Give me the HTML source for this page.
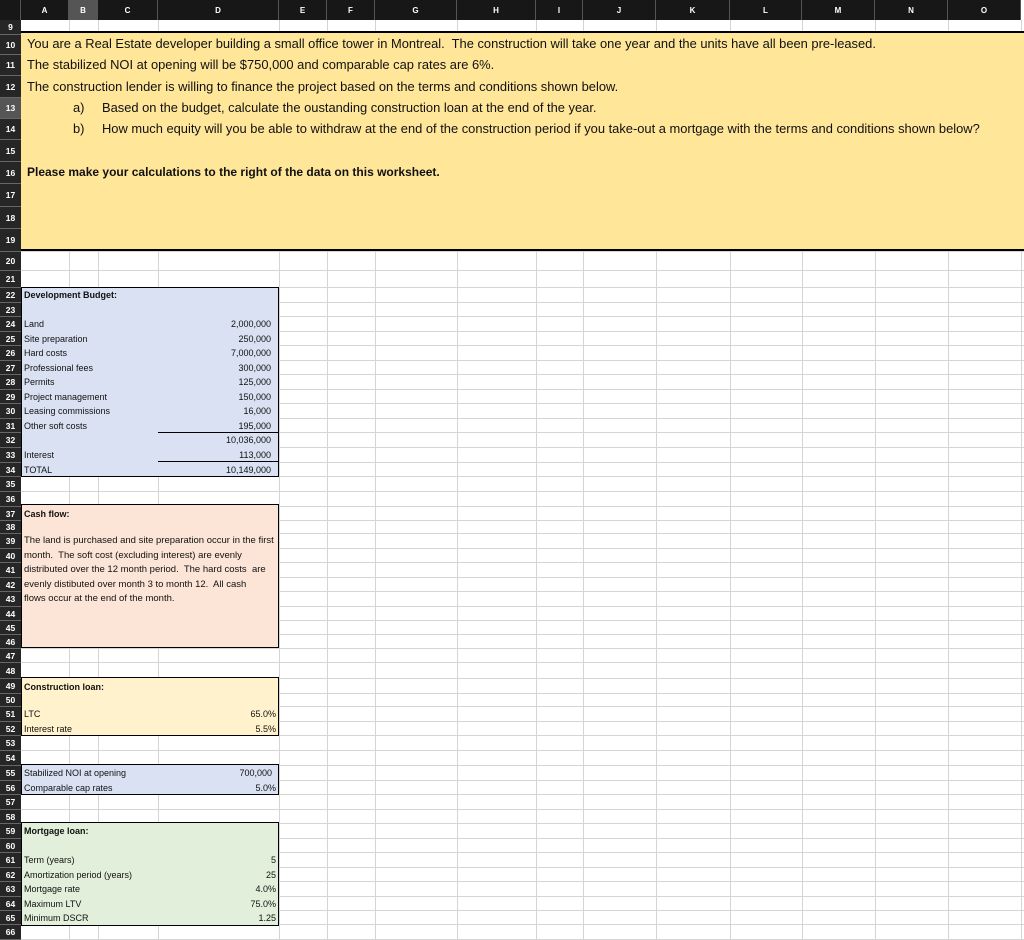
<!DOCTYPE html>
<html><head><meta charset="utf-8">
<style>
*{margin:0;padding:0;box-sizing:border-box}
body{width:1024px;height:940px;overflow:hidden;background:#fff;position:relative;font-family:"Liberation Sans",Arial,sans-serif}
.a{position:absolute}
.hl{position:absolute;height:1px;background:#d4d4d4;left:21px;right:0}
.vl{position:absolute;width:1px;background:#d4d4d4}
.rh{position:absolute;left:0;width:21px;background:#262626;color:#fff;font-size:8.5px;font-weight:bold;text-align:center;border-bottom:1px solid #666;display:flex;align-items:center;justify-content:center}
.ch{position:absolute;top:0;height:20px;background:#171717;color:#fff;font-size:8px;font-weight:bold;display:flex;align-items:center;justify-content:center;border-right:1px solid #555}
.box{position:absolute;left:21px;width:258px;border:1.5px solid #000}
.t{position:absolute;font-size:9px;color:#111;white-space:nowrap}
.r{position:absolute;font-size:9px;color:#111;white-space:nowrap;right:3px;text-align:right}
.y{position:absolute;left:27px;font-size:12.9px;color:#111;white-space:nowrap}
.cf{font-size:9.5px}
</style></head><body>
<div id="g"></div>
<script>
var g=document.getElementById('g'),h='';
var cols=[21,69,98,158,279,327,375,457,536,583,656,730,802,875,948,1021,1024];
var labs='ABCDEFGHIJKLMNO';
for(var i=0;i<15;i++){h+='<div class="ch" style="left:'+cols[i]+'px;width:'+(cols[i+1]-cols[i])+'px;'+(i==1?'background:#555;':'')+'">'+labs[i]+'</div>';}
h+='<div class="ch" style="left:0;width:21px"></div>';
var c={9:25,10:44,11:65,12:87,13:108,14:129,15:151,16:173,17:195,18:218,19:240,20:263,21:279,22:296,23:310,24:324,25:339,26:353,27:368,28:382,29:397,30:411,31:426,32:440,33:455,34:470,35:484,36:499,37:514,38:527,39:541,40:556,41:570,42:585,43:599,44:614,45:628,46:642,47:656,48:670,49:687,50:700,51:714,52:729,53:743,54:758,55:773,56:788,57:802,58:817,59:831,60:846,61:860,62:875,63:889,64:904,65:918,66:932};
c[8]=9;c[67]=950;
for(var r=9;r<=66;r++){var t=r==9?20:Math.round((c[r-1]+c[r])/2),b=Math.round((c[r]+c[r+1])/2);if(r==66)b=940;
h+='<div class="rh" style="top:'+t+'px;height:'+(b-t)+'px;'+(r==13?'background:#555;':'')+'">'+r+'</div>';
h+='<div class="hl" style="top:'+(b-1)+'px"></div>';}
for(var i=1;i<16;i++)h+='<div class="vl" style="left:'+cols[i]+'px;top:20px;height:920px"></div>';
g.innerHTML=h;
</script>
<div class="a" style="left:21px;top:31px;width:1003px;height:220px;background:#ffe699;border-top:2px solid #000;border-bottom:2px solid #000"></div>
<div class="y" style="top:36px">You are a Real Estate developer building a small office tower in Montreal.&nbsp; The construction will take one year and the units have all been pre-leased.</div>
<div class="y" style="top:57px">The stabilized NOI at opening will be $750,000 and comparable cap rates are 6%.</div>
<div class="y" style="top:79px">The construction lender is willing to finance the project based on the terms and conditions shown below.</div>
<div class="y" style="top:100px;left:73px">a)</div>
<div class="y" style="top:100px;left:102px">Based on the budget, calculate the oustanding construction loan at the end of the year.</div>
<div class="y" style="top:121px;left:73px">b)</div>
<div class="y" style="top:121px;left:102px">How much equity will you be able to withdraw at the end of the construction period if you take-out a mortgage with the terms and conditions shown below?</div>
<div class="y" style="top:165px;font-weight:bold;font-size:12px">Please make your calculations to the right of the data on this worksheet.</div>

<div class="box" style="top:287px;height:190px;background:#d9e1f2"></div>
<div class="t" style="left:24px;top:290px;font-weight:bold">Development Budget:</div>
<div class="t" style="left:24px;top:319px">Land</div>
<div class="t" style="left:24px;top:334px">Site preparation</div>
<div class="t" style="left:24px;top:348px">Hard costs</div>
<div class="t" style="left:24px;top:363px">Professional fees</div>
<div class="t" style="left:24px;top:377px">Permits</div>
<div class="t" style="left:24px;top:392px">Project management</div>
<div class="t" style="left:24px;top:406px">Leasing commissions</div>
<div class="t" style="left:24px;top:421px">Other soft costs</div>
<div class="t" style="left:24px;top:450px">Interest</div>
<div class="t" style="left:24px;top:465px">TOTAL</div>
<div class="a" style="left:158px;width:116px;top:0">
<div class="r" style="top:319px">2,000,000</div>
<div class="r" style="top:334px">250,000</div>
<div class="r" style="top:348px">7,000,000</div>
<div class="r" style="top:363px">300,000</div>
<div class="r" style="top:377px">125,000</div>
<div class="r" style="top:392px">150,000</div>
<div class="r" style="top:406px">16,000</div>
<div class="r" style="top:421px">195,000</div>
<div class="r" style="top:435px">10,036,000</div>
<div class="r" style="top:450px">113,000</div>
<div class="r" style="top:465px">10,149,000</div>
</div>
<div class="a" style="left:158px;width:120px;top:432px;height:1px;background:#000"></div>
<div class="a" style="left:158px;width:120px;top:461px;height:1px;background:#000"></div>

<div class="box" style="top:504px;height:144px;background:#fce4d6"></div>
<div class="t" style="left:24px;top:509px;font-weight:bold">Cash flow:</div>
<div class="t cf" style="left:24px;top:535px">The land is purchased and site preparation occur in the first</div>
<div class="t cf" style="left:24px;top:550px">month.&nbsp; The soft cost (excluding interest) are evenly</div>
<div class="t cf" style="left:24px;top:564px">distributed over the 12 month period.&nbsp; The hard costs&nbsp; are</div>
<div class="t cf" style="left:24px;top:579px">evenly distibuted over month 3 to month 12.&nbsp; All cash</div>
<div class="t cf" style="left:24px;top:593px">flows occur at the end of the month.</div>

<div class="box" style="top:677px;height:59px;background:#fff2cc"></div>
<div class="t" style="left:24px;top:682px;font-weight:bold">Construction loan:</div>
<div class="t" style="left:24px;top:709px">LTC</div>
<div class="t" style="left:24px;top:724px">Interest rate</div>
<div class="a" style="left:158px;width:121px;top:0">
<div class="r" style="top:709px">65.0%</div>
<div class="r" style="top:724px">5.5%</div>
</div>

<div class="box" style="top:764px;height:31px;background:#d9e1f2"></div>
<div class="t" style="left:24px;top:768px">Stabilized NOI at opening</div>
<div class="t" style="left:24px;top:783px">Comparable cap rates</div>
<div class="a" style="left:158px;width:121px;top:0">
<div class="r" style="top:768px;right:7px">700,000</div>
<div class="r" style="top:783px">5.0%</div>
</div>

<div class="box" style="top:822px;height:104px;background:#e2efda"></div>
<div class="t" style="left:24px;top:826px;font-weight:bold">Mortgage loan:</div>
<div class="t" style="left:24px;top:855px">Term (years)</div>
<div class="t" style="left:24px;top:870px">Amortization period (years)</div>
<div class="t" style="left:24px;top:884px">Mortgage rate</div>
<div class="t" style="left:24px;top:899px">Maximum LTV</div>
<div class="t" style="left:24px;top:913px">Minimum DSCR</div>
<div class="a" style="left:158px;width:121px;top:0">
<div class="r" style="top:855px">5</div>
<div class="r" style="top:870px">25</div>
<div class="r" style="top:884px">4.0%</div>
<div class="r" style="top:899px">75.0%</div>
<div class="r" style="top:913px">1.25</div>
</div>
</body></html>
